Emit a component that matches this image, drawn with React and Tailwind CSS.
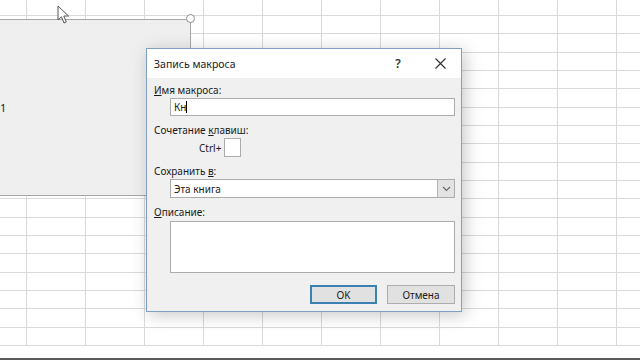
import React from 'react';

const rows = [16, ...Array(18).fill(18.33)];
const cols = [27, ...Array(11).fill(59)];

// underline one letter, as dialog access keys do
function Key({ children }) {
  return <span className="underline underline-offset-[1px]">{children}</span>;
}

function Sheet() {
  return (
    <div className="flex flex-col w-full">
      {rows.map((h, r) => (
        <div key={r} className="flex shrink-0" style={{ height: h }}>
          {cols.map((w, c) => (
            <div key={c} className="shrink-0 border-r border-b border-[#d9d9d9]" style={{ width: w }} />
          ))}
        </div>
      ))}
    </div>
  );
}

function Dialog() {
  return (
    <div className="absolute left-[146px] top-[48px] w-[316px] h-[264px] border border-[#7f9fc6] bg-[#f0f0f0] flex flex-col shadow-[3px_3px_16px_rgba(0,0,0,0.22)] text-[10px] leading-[14px] text-[#1b1b1b]">
      {/* title bar */}
      <div className="h-[29px] bg-white flex items-center pl-[7px] pr-[15px] shrink-0">
        <span className="text-[10.5px] flex-1 text-[#222]">Запись макроса</span>
        <span className="text-[12px] font-semibold text-[#333] w-[16px] text-center">?</span>
        <svg className="ml-[29px]" width="11" height="11" viewBox="0 0 11 11">
          <path d="M0.5 0.5 L10.5 10.5 M10.5 0.5 L0.5 10.5" stroke="#333" strokeWidth="1.2" />
        </svg>
      </div>

      {/* body */}
      <div className="flex flex-col pl-[7px] pr-[6px] pt-[5px]">
        <div><Key>И</Key>мя макроса:</div>
        <div className="mt-[1px] ml-[16px] h-[18px] bg-white border border-[#acacac] flex items-center pl-[3px]">
          <span>Кн</span>
          <span className="w-px h-[12px] bg-black" />
        </div>

        <div className="mt-[7px]">Сочетание <Key>к</Key>лавиш:</div>
        <div className="mt-[1px] ml-[45px] flex items-center gap-[3px]">
          <span>Ctrl+</span>
          <div className="w-[17px] h-[19px] bg-white border border-[#acacac]" />
        </div>

        <div className="mt-[7px]">Сохранить <Key>в</Key>:</div>
        <div className="mt-[1px] ml-[16px] h-[19px] bg-white border border-[#acacac] flex items-center">
          <span className="flex-1 pl-[3px]">Эта книга</span>
          <div className="w-[17px] h-full bg-[#e3e3e3] border-l border-[#b4b4b4] flex items-center justify-center">
            <svg width="9" height="6" viewBox="0 0 9 6">
              <path d="M1 1 L4.5 4.5 L8 1" fill="none" stroke="#666" strokeWidth="1.1" />
            </svg>
          </div>
        </div>

        <div className="mt-[7px]"><Key>О</Key>писание:</div>
        <div className="mt-[2px] ml-[16px] h-[52px] bg-white border border-[#acacac]" />

        <div className="mt-[12px] flex justify-end gap-[10px]">
          <button className="w-[67px] h-[19px] bg-[#e1e1e1] border-2 border-[#3c7fb1] text-[10px] leading-none">OK</button>
          <button className="w-[68px] h-[19px] bg-[#e1e1e1] border border-[#adadad] text-[10px] leading-none">Отмена</button>
        </div>
      </div>
    </div>
  );
}

export default function App() {
  return (
    <div className="relative w-[640px] h-[360px] overflow-hidden bg-white" style={{ fontFamily: '"Noto Sans", "Open Sans", sans-serif' }}>
      <Sheet />

      {/* drawn shape on the sheet */}
      <div className="absolute left-0 top-[19px] w-[191px] h-[177px] bg-[#efefef] border border-[#a6a6a6] border-l-0">
        <span className="absolute left-0 top-[82px] text-[11px] leading-none text-[#222]">1</span>
      </div>
      <div className="absolute left-[186px] top-[14px] w-[9px] h-[9px] rounded-full border-[1.5px] border-[#8c8c8c] bg-white" />

      {/* mouse pointer */}
      <svg className="absolute left-[57px] top-[5px]" width="14" height="20" viewBox="0 0 14 20">
        <path d="M1 1 L1 15 L4.5 11.8 L7 18 L9.3 17 L6.8 11 L11.5 11 Z" fill="white" stroke="#555" strokeWidth="1" strokeLinejoin="round" />
      </svg>

      <Dialog />

      <div className="absolute left-0 bottom-0 w-full h-[2px] bg-[#5a5a5a]" />
    </div>
  );
}
